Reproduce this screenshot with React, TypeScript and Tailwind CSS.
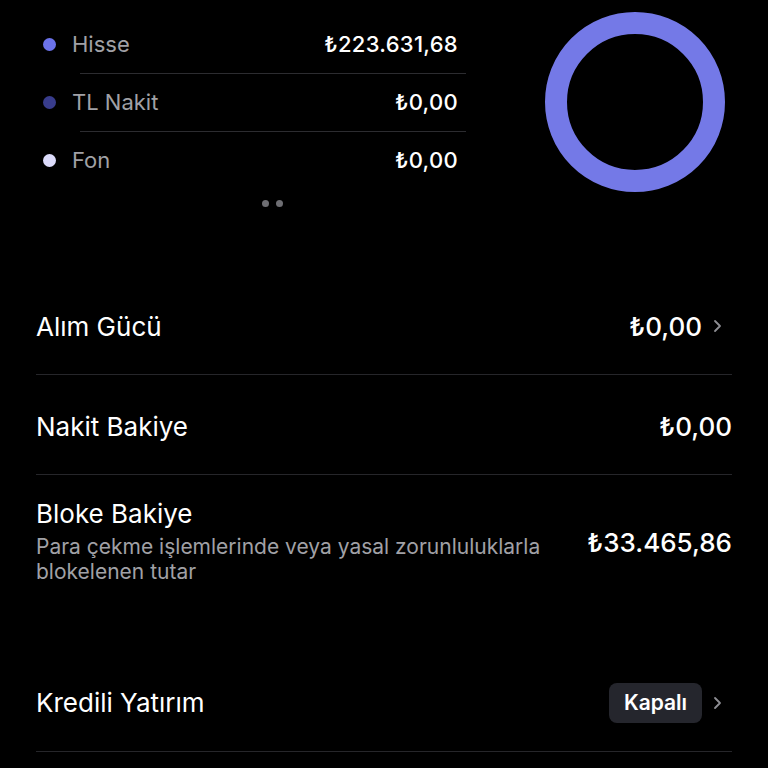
const legend = [
  { label: "Hisse", value: "₺223.631,68", dot: "bg-[#6b72ea]" },
  { label: "TL Nakit", value: "₺0,00", dot: "bg-[#383c8c]" },
  { label: "Fon", value: "₺0,00", dot: "bg-[#dcdbfb]" },
];

const Chevron = () => (
  <svg width="9" height="14" viewBox="0 0 9 14" fill="none" className="ml-[11px]">
    <path d="M2 2l5 5-5 5" stroke="#8e8e93" strokeWidth="1.8" strokeLinecap="round" strokeLinejoin="round" />
  </svg>
);

const Divider = () => <div className="h-px bg-[#26262a]" />;

export default function App() {
  return (
    <div className="min-h-screen bg-black px-9 font-['Inter',sans-serif] text-white">
      <div className="flex">
        <div className="w-[430px] pt-[16px]">
          {legend.map((item, i) => (
            <div key={item.label}>
              <div className="flex h-[57px] items-center pl-[7px] pr-2">
                <span className={`h-[13px] w-[13px] rounded-full ${item.dot}`} />
                <span className="ml-4 text-[22px] text-[#a1a1a6]">{item.label}</span>
                <span className="ml-auto text-[22px] font-medium tracking-[0.3px]">{item.value}</span>
              </div>
              {i < legend.length - 1 && <div className="ml-[44px] h-px bg-[#2c2c30]" />}
            </div>
          ))}
        </div>
        <div className="ml-[79px] mt-[12px]">
          <svg width="180" height="180" viewBox="0 0 180 180">
            <circle cx="90" cy="90" r="79" fill="none" stroke="#7479e7" strokeWidth="22" />
          </svg>
        </div>
      </div>

      <div className="ml-[226px] mt-[8px] flex gap-[7px]">
        <span className="h-[7px] w-[7px] rounded-full bg-[#6e6e73]" />
        <span className="h-[7px] w-[7px] rounded-full bg-[#6e6e73]" />
      </div>

      <div className="mt-[68px]">
        <div className="flex h-[99px] items-center pt-[3px]">
          <span className="text-[26px]">Alım Gücü</span>
          <div className="ml-auto flex items-center pr-[10px]">
            <span className="text-[26px] font-medium">₺0,00</span>
            <Chevron />
          </div>
        </div>
        <Divider />
        <div className="flex h-[99px] items-center pt-[3px]">
          <span className="text-[26px]">Nakit Bakiye</span>
          <span className="ml-auto text-[26px] font-medium">₺0,00</span>
        </div>
        <Divider />
        <div className="flex items-center py-[25px]">
          <div className="w-[540px]">
            <div className="text-[26px] leading-[28px]">Bloke Bakiye</div>
            <div className="mt-[6px] text-[21px] leading-[25px] text-[#a1a1a6]">
              Para çekme işlemlerinde veya yasal zorunluluklarla blokelenen tutar
            </div>
          </div>
          <span className="ml-auto text-[26px] font-medium">₺33.465,86</span>
        </div>

        <div className="mt-[43px] flex h-[99px] items-center pt-[2px]">
          <span className="text-[26px]">Kredili Yatırım</span>
          <div className="ml-auto flex items-center pr-[10px]">
            <span className="flex h-[40px] w-[93px] items-center justify-center rounded-[8px] bg-[#25262d] text-[21px] font-semibold">
              Kapalı
            </span>
            <Chevron />
          </div>
        </div>
        <Divider />
      </div>
    </div>
  );
}
